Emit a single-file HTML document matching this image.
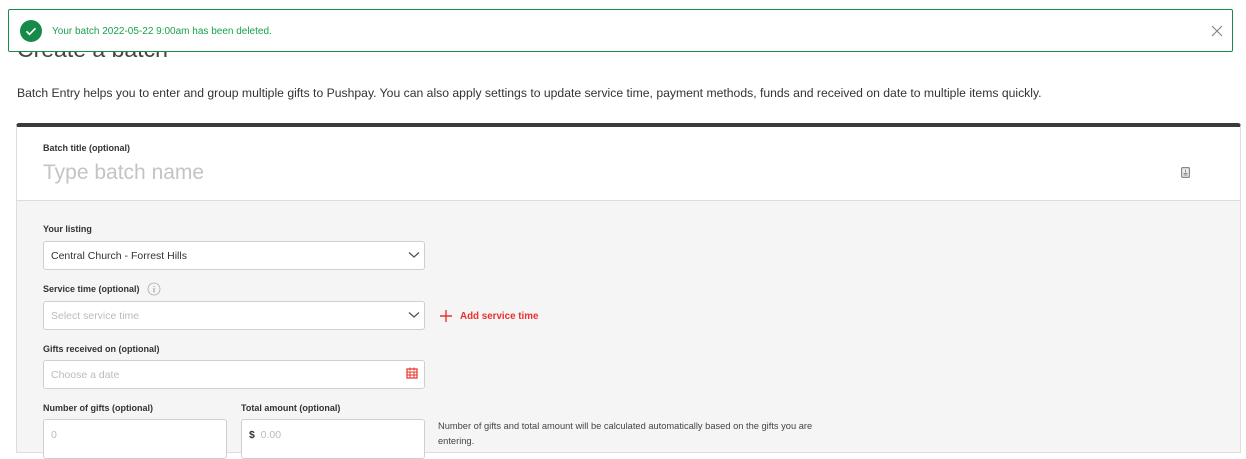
<!DOCTYPE html>
<html><head><style>
*{box-sizing:border-box;margin:0;padding:0}
body{width:1246px;height:445px;overflow:hidden;background:#fff;font-family:"Liberation Sans",sans-serif;position:relative;color:#333}
.a{position:absolute}
.lbl{position:absolute;font-size:9px;font-weight:bold;color:#333}
.inp{position:absolute;background:#fff;border:1px solid #cfcfcf;border-radius:3px;height:29px;font-size:10.5px;line-height:29px;padding-left:7px;color:#bbb}
</style></head><body>
<div class="a" style="left:17px;top:36px;font-size:23px;font-weight:300;color:#444">Create a batch</div>
<div class="a" style="left:8px;top:9px;width:1225px;height:43px;border:1px solid #1a8a4a;border-radius:2px;background:#fff">
 <svg class="a" style="left:11px;top:10px" width="22" height="22"><circle cx="11" cy="11" r="11" fill="#168a48"/><path d="M6.5 11.3l3 3 6-6" stroke="#fff" stroke-width="1.7" fill="none"/></svg>
 <div class="a" style="left:43px;top:16px;font-size:10px;color:#16a34a">Your batch 2022-05-22 9:00am has been deleted.</div>
 <svg class="a" style="left:1202px;top:15px" width="12" height="12"><path d="M1 1L11 11M11 1L1 11" stroke="#888" stroke-width="1.2"/></svg>
</div>
<div class="a" style="left:17px;top:86px;font-size:12.2px;color:#333;white-space:nowrap">Batch Entry helps you to enter and group multiple gifts to Pushpay. You can also apply settings to update service time, payment methods, funds and received on date to multiple items quickly.</div>
<div class="a" style="left:16px;top:123px;width:1225px;height:330px;border:1px solid #ddd;border-top:4px solid #3a3a3a;border-radius:3px 3px 0 0;background:#f5f5f5">
 <div class="a" style="left:0;top:0;width:100%;height:74px;background:#fff;border-bottom:1px solid #ddd"></div>
</div>
<div class="lbl" style="left:43px;top:143px">Batch title (optional)</div>
<div class="a" style="left:43px;top:161px;font-size:21px;color:#c4c4c4">Type batch name</div>
<svg class="a" style="left:1181px;top:167px" width="9" height="11"><rect x="0.6" y="0.6" width="7.8" height="9.8" rx="1" fill="#eee" stroke="#888" stroke-width="1.2"/><path d="M2.5 6.5h4M2.5 8h4M4.5 2.5v3" stroke="#888" stroke-width="1"/></svg>
<div class="lbl" style="left:43px;top:224px">Your listing</div>
<div class="inp" style="left:43px;top:241px;width:382px;color:#333">Central Church - Forrest Hills</div>
<div class="lbl" style="left:43px;top:284px">Service time (optional)</div>
<svg class="a" style="left:147px;top:282px" width="14" height="14"><circle cx="7" cy="7" r="6" fill="none" stroke="#aaa" stroke-width="0.8"/><path d="M7 6v4.5M7 4v1" stroke="#999" stroke-width="1"/></svg>
<div class="inp" style="left:43px;top:301px;width:382px">Select service time</div>
<svg class="a" style="left:408px;top:251px" width="12" height="8"><path d="M1 1.5l5 4.5 5-4.5" stroke="#555" stroke-width="1.3" fill="none"/></svg>
<svg class="a" style="left:408px;top:311px" width="12" height="8"><path d="M1 1.5l5 4.5 5-4.5" stroke="#555" stroke-width="1.3" fill="none"/></svg>
<svg class="a" style="left:439px;top:309px" width="14" height="14"><path d="M7 1v12M1 7h12" stroke="#e8312f" stroke-width="1.4"/></svg>
<div class="a" style="left:460px;top:311px;font-size:9.8px;font-weight:bold;color:#e8312f">Add service time</div>
<div class="lbl" style="left:43px;top:344px">Gifts received on (optional)</div>
<div class="inp" style="left:43px;top:360px;width:382px">Choose a date</div>
<svg class="a" style="left:406px;top:367px" width="12" height="12"><rect x="1" y="2" width="10" height="9" fill="none" stroke="#e8312f" stroke-width="1.2"/><path d="M1 5h10M4 0.5v3M8 0.5v3M4 5v6M8 5v6M1 8h10" stroke="#e8312f" stroke-width="1"/></svg>
<div class="lbl" style="left:43px;top:403px">Number of gifts (optional)</div>
<div class="lbl" style="left:241px;top:403px">Total amount (optional)</div>
<div class="inp" style="left:43px;top:419px;width:184px;height:40px;line-height:30px">0</div>
<div class="inp" style="left:241px;top:419px;width:184px;height:40px;line-height:30px"><b style="color:#333">$</b>&nbsp; 0.00</div>
<div class="a" style="left:438px;top:419px;font-size:9.3px;line-height:15px;color:#444;width:390px">Number of gifts and total amount will be calculated automatically based on the gifts you are entering.</div>
</body></html>
